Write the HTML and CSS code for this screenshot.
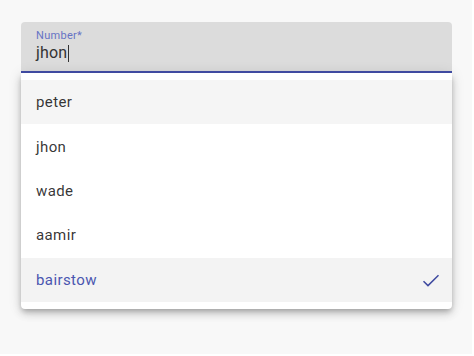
FILE: index.html
```html
<!DOCTYPE html>
<html>
<head>
<meta charset="utf-8">
<link rel="stylesheet" href="styles.css">
</head>
<body>
<div class="page">
  <div class="field">
    <div class="field-inner">
      <div class="label">Number*</div>
      <div class="input">jhon<span class="caret"></span></div>
    </div>
    <div class="underline"></div>
  </div>
  <div class="panel">
    <div class="option active">peter</div>
    <div class="option">jhon</div>
    <div class="option">wade</div>
    <div class="option">aamir</div>
    <div class="option selected">
      <span>bairstow</span>
      <svg class="check" width="18" height="14" viewBox="0 0 18 14"><path d="M1.5 7.2 L6 11.6 L16.5 1.2" fill="none" stroke="#3f4aa0" stroke-width="1.5"/></svg>
    </div>
  </div>
</div>
</body>
</html>
```
FILE: styles.css
```css
html, body {
  margin: 0;
  padding: 0;
  background: #ffffff;
}
body {
  font-family: Roboto, "Noto Sans", Arial, sans-serif;
  width: 474px;
  height: 356px;
  overflow: hidden;
}
.page {
  width: 472px;
  height: 354px;
  background: #f8f8f8;
  padding: 22px 20px 0 21px;
  box-sizing: border-box;
}
.field {
  background: #dcdcdc;
  border-radius: 4px 4px 0 0;
  height: 51px;
  display: flex;
  flex-direction: column;
  justify-content: space-between;
}
.field-inner {
  padding: 7px 15px 0 15px;
}
.label {
  font-size: 11px;
  color: #6673c4;
  line-height: 13px;
  letter-spacing: 0.3px;
}
.input {
  font-size: 16px;
  color: #333333;
  line-height: 20px;
  margin-top: 1px;
  display: flex;
  align-items: center;
  letter-spacing: 0.2px;
}
.caret {
  display: inline-block;
  width: 1px;
  height: 17px;
  background: #333333;
  margin-left: 1px;
}
.underline {
  height: 2px;
  background: #3f4aa0;
}
.panel {
  background: #ffffff;
  border-radius: 0 0 4px 4px;
  box-shadow: 0 3px 5px -1px rgba(0,0,0,.2), 0 5px 8px 0 rgba(0,0,0,.14), 0 1px 14px 0 rgba(0,0,0,.12);
  padding: 7px 0 7px 0;
}
.option {
  height: 44.4px;
  display: flex;
  align-items: center;
  justify-content: space-between;
  padding: 0 12px 0 15px;
  font-size: 15px;
  letter-spacing: 0.4px;
  color: rgba(0,0,0,.8);
}
.option.active {
  background: #f5f5f5;
}
.option.selected {
  background: #f3f3f3;
  color: #4a56b0;
}
.check {
  display: block;
  margin-top: 2px;
}
```
